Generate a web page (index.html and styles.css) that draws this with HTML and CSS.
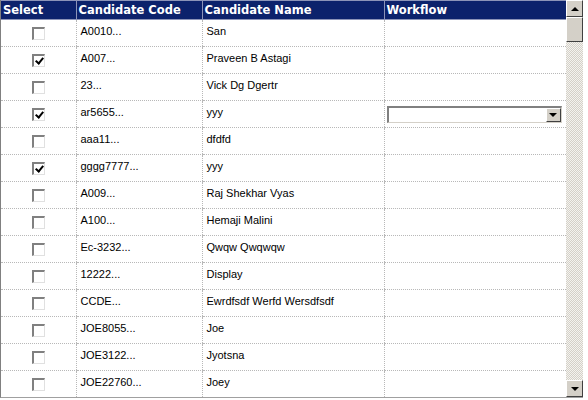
FILE: index.html
```html
<!DOCTYPE html>
<html lang="en">
<head>
  <meta charset="UTF-8" />
  <title>Candidates</title>
  <link rel="stylesheet" href="styles.css">
</head>
<body>

  <div class="grid">
    <div class="grid-body">
      <table class="candidates">
        <colgroup>
          <col class="col-select">
          <col class="col-code">
          <col class="col-name">
          <col class="col-flow">
        </colgroup>
        <thead>
          <tr>
            <th>Select</th>
            <th>Candidate Code</th>
            <th>Candidate Name</th>
            <th>Workflow</th>
          </tr>
        </thead>
        <tbody>
          <tr><td class="sel"><span class="chk"></span></td><td>A0010...</td><td>San</td><td></td></tr>
          <tr><td class="sel"><span class="chk on"></span></td><td>A007...</td><td>Praveen B Astagi</td><td></td></tr>
          <tr><td class="sel"><span class="chk"></span></td><td>23...</td><td>Vick Dg Dgertr</td><td></td></tr>
          <tr><td class="sel"><span class="chk on"></span></td><td>ar5655...</td><td>yyy</td><td class="flow"><div class="combo"><span class="combo-text"></span><span class="combo-btn"><i class="tri down"></i></span></div></td></tr>
          <tr><td class="sel"><span class="chk"></span></td><td>aaa11...</td><td>dfdfd</td><td></td></tr>
          <tr><td class="sel"><span class="chk on"></span></td><td>gggg7777...</td><td>yyy</td><td></td></tr>
          <tr><td class="sel"><span class="chk"></span></td><td>A009...</td><td>Raj Shekhar Vyas</td><td></td></tr>
          <tr><td class="sel"><span class="chk"></span></td><td>A100...</td><td>Hemaji Malini</td><td></td></tr>
          <tr><td class="sel"><span class="chk"></span></td><td>Ec-3232...</td><td>Qwqw Qwqwqw</td><td></td></tr>
          <tr><td class="sel"><span class="chk"></span></td><td>12222...</td><td>Display</td><td></td></tr>
          <tr><td class="sel"><span class="chk"></span></td><td>CCDE...</td><td>Ewrdfsdf Werfd Wersdfsdf</td><td></td></tr>
          <tr><td class="sel"><span class="chk"></span></td><td>JOE8055...</td><td>Joe</td><td></td></tr>
          <tr><td class="sel"><span class="chk"></span></td><td>JOE3122...</td><td>Jyotsna</td><td></td></tr>
          <tr><td class="sel"><span class="chk"></span></td><td>JOE22760...</td><td>Joey</td><td></td></tr>
        </tbody>
      </table>
    </div>

    <div class="scrollbar">
      <div class="sb-btn"><i class="tri up"></i></div>
      <div class="sb-thumb"></div>
      <div class="sb-track"></div>
      <div class="sb-btn"><i class="tri down"></i></div>
    </div>
  </div>

</body>
</html>
```

FILE: styles.css
```css
body {
  margin: 0;
  background-color: white;
  font-family: "Liberation Sans", Arial, sans-serif;
  font-size: 11px;
  color: black;
}
.grid {
  display: flex;
  width: 583px;
  height: 398px;
  border-left: 1px solid #808080;
  border-bottom: 1px solid #a0a0a0;
  box-sizing: border-box;
}
.grid-body {
  width: 565px;
  overflow: hidden;
}
.candidates {
  border-collapse: collapse;
  table-layout: fixed;
  width: 565px;
}
.col-select { width: 75px; }
.col-code { width: 126px; }
.col-name { width: 182px; }
.col-flow { width: 182px; }

.candidates th {
  height: 18px;
  padding: 0 0 0 2px;
  background-color: #0c226c;
  color: white;
  font-family: "DejaVu Sans", Verdana, sans-serif;
  font-weight: bold;
  font-size: 11.5px;
  text-align: left;
  border-left: 1px solid #8c94b8;
  border-top: 1px solid #8c94b8;
  border-bottom: 1px solid #8c94b8;
}
.candidates th:first-child {
  border-left: none;
}
.candidates td {
  height: 27px;
  padding: 5px 0 0 4px;
  vertical-align: top;
  border-left: 1px dotted #b8b8b8;
  border-bottom: 1px dotted #b8b8b8;
  box-sizing: border-box;
  white-space: nowrap;
  overflow: hidden;
}
.candidates td:first-child {
  border-left: none;
}
.candidates td.sel {
  padding: 7px 0 0 0;
  text-align: center;
}
.chk {
  display: inline-block;
  width: 10px;
  height: 10px;
  border-top: 2px solid #808080;
  border-left: 2px solid #808080;
  border-right: 1px solid #e0e0e0;
  border-bottom: 1px solid #e0e0e0;
  background-color: white;
  position: relative;
}
.chk.on::after {
  content: "";
  position: absolute;
  left: 3px;
  top: 0px;
  width: 3px;
  height: 6px;
  border-right: 2px solid black;
  border-bottom: 2px solid black;
  transform: rotate(40deg);
}
.candidates td.flow {
  padding: 5px 0 0 2px;
}
.combo {
  display: flex;
  width: 175px;
  height: 17px;
  border-top: 2px solid #808080;
  border-left: 2px solid #808080;
  border-right: 1px solid #d4d0c8;
  border-bottom: 1px solid #d4d0c8;
  box-sizing: border-box;
  background-color: white;
}
.combo-text {
  flex: 1;
}
.combo-btn {
  width: 15px;
  background-color: #d4d0c8;
  border-top: 1px solid white;
  border-left: 1px solid white;
  border-right: 1px solid #404040;
  border-bottom: 1px solid #404040;
  box-sizing: border-box;
  display: flex;
  align-items: center;
  justify-content: center;
}
.tri {
  display: block;
  width: 0;
  height: 0;
  border-left: 4px solid transparent;
  border-right: 4px solid transparent;
}
.tri.down {
  border-top: 4px solid black;
}
.tri.up {
  border-bottom: 4px solid black;
}
.scrollbar {
  width: 17px;
  display: flex;
  flex-direction: column;
  background-color: #ebe9e4;
  background-image: repeating-conic-gradient(#d4d0c8 0 25%, #f4f3ef 0 50%);
  background-size: 2px 2px;
}
.sb-btn, .sb-thumb {
  background-color: #d4d0c8;
  border-top: 1px solid white;
  border-left: 1px solid white;
  border-right: 1px solid #404040;
  border-bottom: 1px solid #404040;
  box-sizing: border-box;
}
.sb-btn {
  height: 17px;
  display: flex;
  align-items: center;
  justify-content: center;
}
.sb-thumb {
  height: 25px;
}
.sb-track {
  flex: 1;
}
```
